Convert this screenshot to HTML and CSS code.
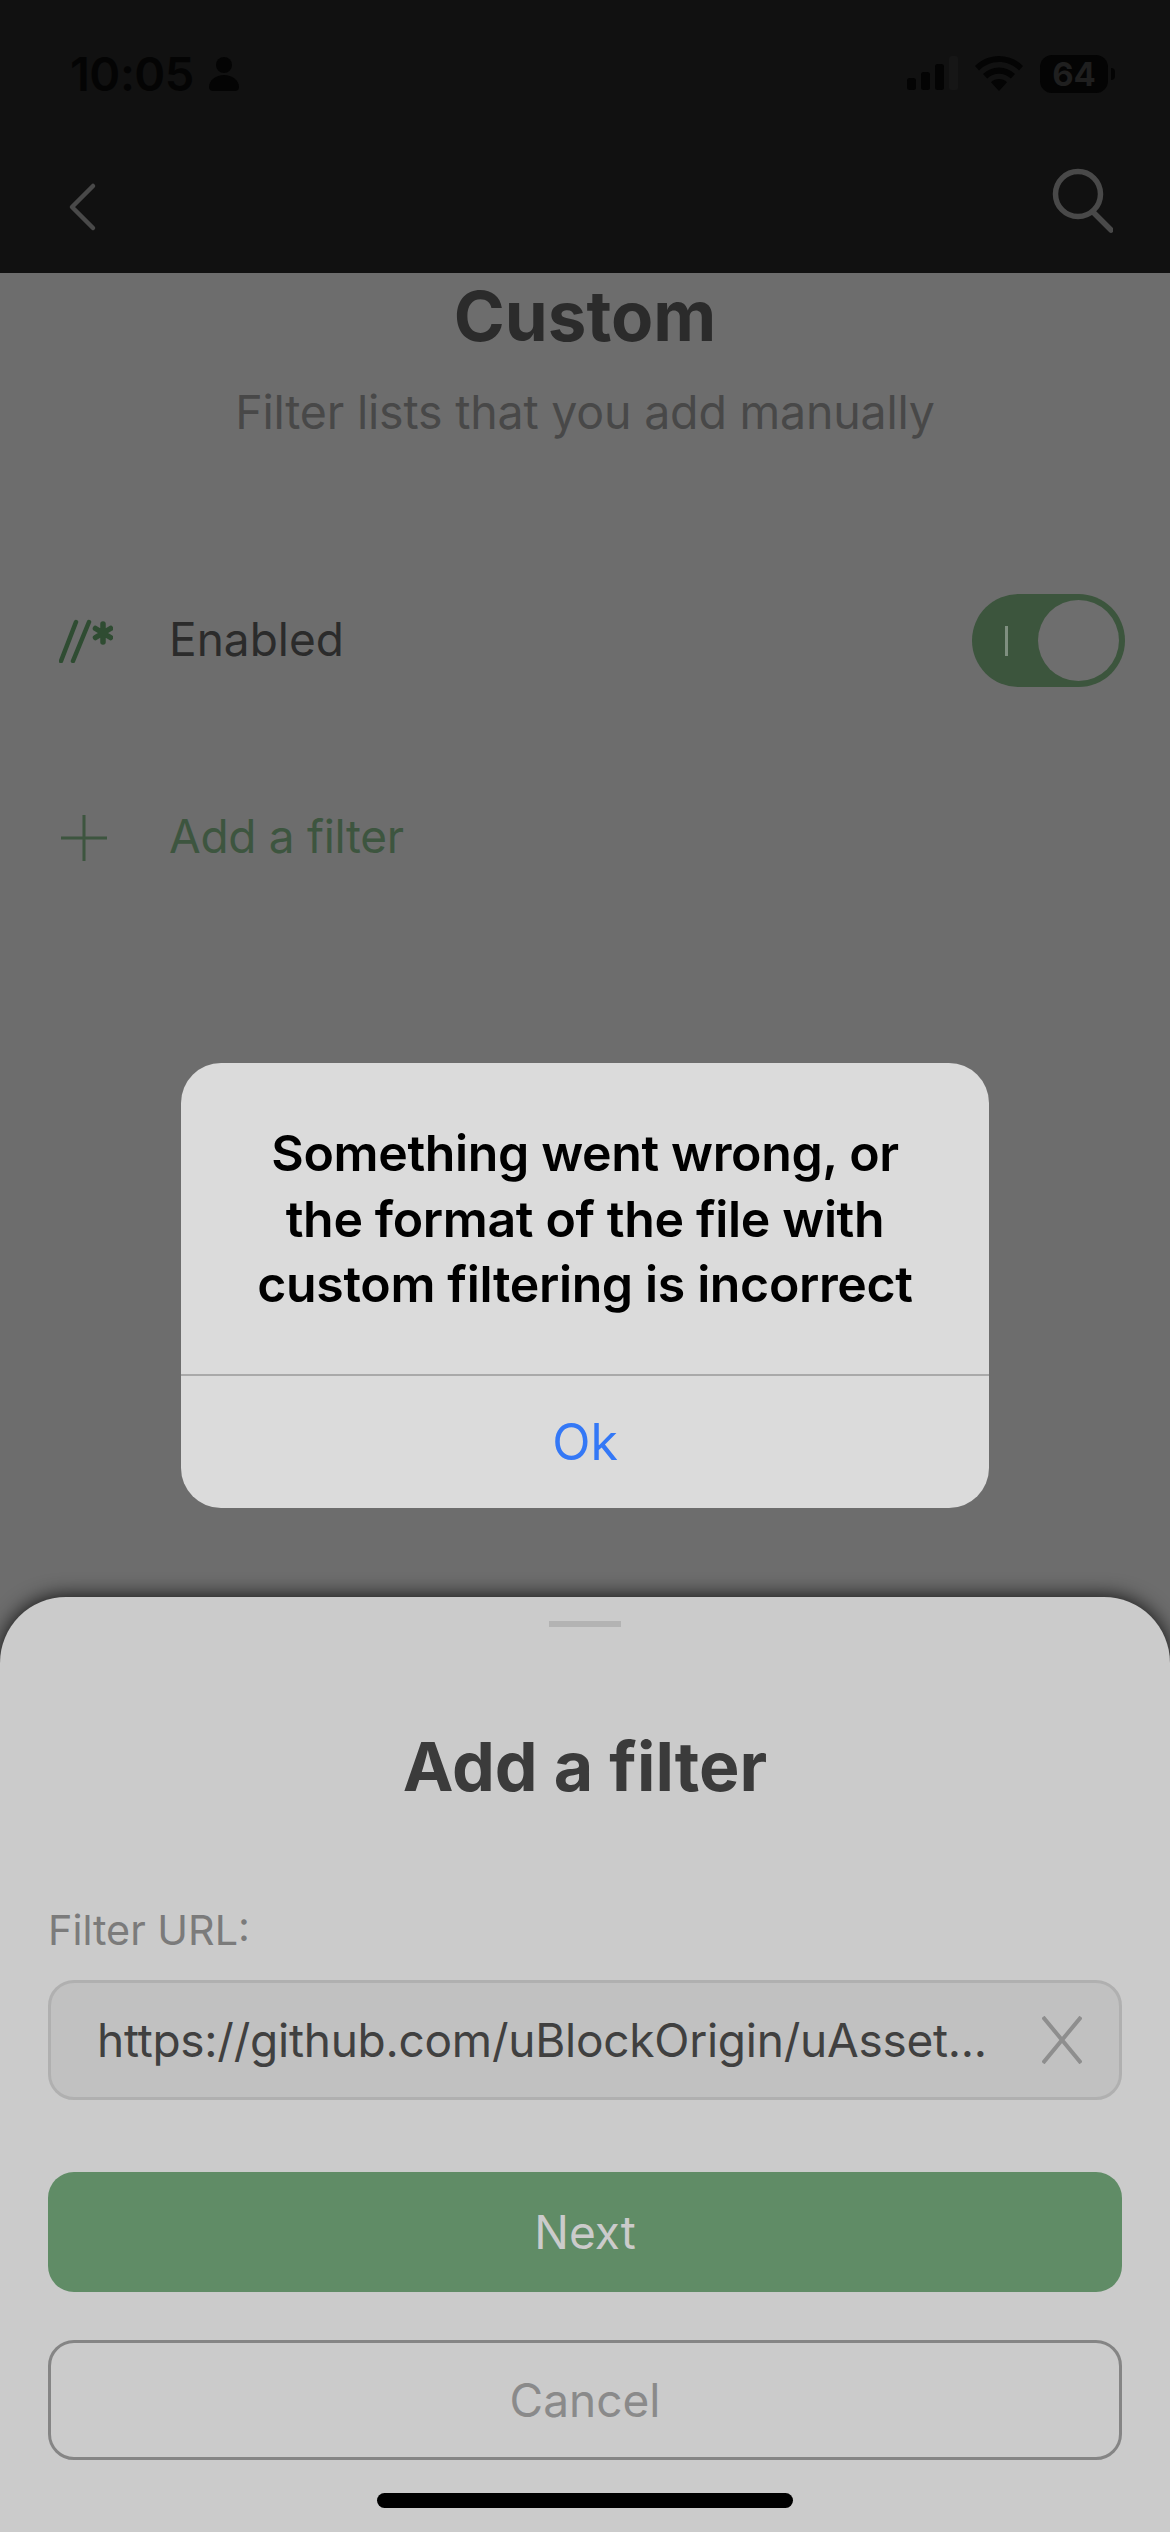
FILE: index.html
```html
<!DOCTYPE html>
<html lang="en">
<head>
<meta charset="utf-8">
<title>Custom</title>
<link rel="stylesheet" href="styles.css">
</head>
<body>
<div class="screen">
  <header class="top">
    <div class="status">
      <div class="status-left">
        <span class="time">10:05</span>
        <svg class="person" width="30" height="34" viewBox="0 0 30 34"><circle cx="15" cy="8" r="8"/><path d="M0 30c0-7 7-12 15-12s15 5 15 12c0 2.500-1.500 4-4 4H4c-2.500 0-4-1.500-4-4z"/></svg>
      </div>
      <div class="status-right">
        <svg class="signal" width="51" height="36" viewBox="0 0 51 36"><rect y="22" width="9" height="12" rx="2.500"/><rect x="14" y="16" width="9" height="18" rx="2.500"/><rect x="28" y="8" width="9" height="26" rx="2.500"/><rect class="signal-off" x="42" width="9" height="34" rx="2.500"/></svg>
        <svg class="wifi" width="48" height="36" viewBox="0 0 48 36"><path d="M24 0c9 0 17.500 3.500 24 10l-4 4.500C38.500 9 31.500 6 24 6S9.500 9 4 14.500L0 10C6.500 3.500 15 0 24 0z"/><path d="M24 11.500c6 0 11.500 2.300 16 6.500l-4.200 4.500c-3.200-3-7.400-4.800-11.800-4.800s-8.600 1.800-11.800 4.800L8 18c4.500-4.200 10-6.500 16-6.500z"/><path d="M24 23c3 0 5.800 1.100 8 3.200L24 35l-8-8.800c2.200-2.100 5-3.200 8-3.200z"/></svg>
        <div class="battery"><span class="battery-body">64</span><span class="battery-cap"></span></div>
      </div>
    </div>
    <nav class="nav">
      <svg class="back" width="30" height="50" viewBox="0 0 30 50"><path d="M26 4 5 25l21 21"/></svg>
      <svg class="search" width="62" height="66" viewBox="0 0 62 66"><circle cx="27" cy="27" r="22.500"/><path d="M42 45 60 63"/></svg>
    </nav>
  </header>

  <main class="content">
    <h1 class="title">Custom</h1>
    <p class="subtitle">Filter lists that you add manually</p>
    <div class="row row-enabled">
      <svg class="row-icon" width="54" height="44" viewBox="0 0 54 44"><path class="slashes" d="M2 42 17 3M14 42 30 3"/><path class="star" d="M44 5v18M36.500 9.500l15 9M51.500 9.500l-15 9"/></svg>
      <span class="row-label">Enabled</span>
      <div class="toggle"><span class="toggle-bar"></span><span class="toggle-knob"></span></div>
    </div>
    <div class="row row-add">
      <svg class="row-icon" width="54" height="48" viewBox="0 0 54 48"><path class="plus" d="M2 24h46M25 1v46"/></svg>
      <span class="row-label row-label-green">Add a filter</span>
    </div>
  </main>

  <section class="alert">
    <p class="alert-text">Something went wrong, or<br>the format of the file with<br>custom filtering is incorrect</p>
    <div class="alert-action">Ok</div>
  </section>

  <section class="sheet">
    <div class="handle"></div>
    <h2 class="sheet-title">Add a filter</h2>
    <label class="field-label">Filter URL:</label>
    <div class="field">
      <span class="field-value">https://github.com/uBlockOrigin/uAsset...</span>
      <svg class="clear" width="40" height="48" viewBox="0 0 40 48"><path d="M1 1l38 46M39 1 1 47"/></svg>
    </div>
    <div class="btn btn-primary">Next</div>
    <div class="btn btn-outline">Cancel</div>
    <div class="home-bar"></div>
  </section>
</div>
</body>
</html>
```
FILE: styles.css
```css
* { box-sizing: border-box; }
html, body { margin: 0; padding: 0; }
body { font-family: Inter, "Liberation Sans", sans-serif; background: #6d6d6d; }

.screen {
  position: relative;
  width: 1170px;
  height: 2532px;
  overflow: hidden;
  background: #6d6d6d;
}

/* header */
.top { height: 273px; background: #111; display: flex; flex-direction: column; }
.status { display: flex; justify-content: space-between; align-items: center; padding: 55px 55px 0 70px; height: 93px; }
.status-left { display: flex; align-items: center; gap: 15px; }
.time { font-size: 47px; line-height: 38px; font-weight: 600; color: #040404; letter-spacing: -.5px; }
.person { fill: #040404; }
.status-right { display: flex; align-items: center; }
.signal { fill: #040404; margin-right: 17px; }
.signal-off { fill: #161616; }
.wifi { fill: #040404; margin-right: 17px; }
.battery { display: flex; align-items: center; gap: 3px; }
.battery-body {
  width: 68px; height: 38px; border-radius: 12px; background: #040404;
  color: #1f1f1f; font-size: 33px; font-weight: 700; line-height: 38px; text-align: center;
}
.battery-cap { width: 4px; height: 12px; border-radius: 0 6px 6px 0; background: #040404; }

.nav { flex: 1; display: flex; justify-content: space-between; align-items: flex-start; padding: 80px 57px 0 67px; }
.back { fill: none; stroke: #494949; stroke-width: 4.500; stroke-linecap: round; stroke-linejoin: round; margin-top: 9px; }
.search { fill: none; stroke: #494949; stroke-width: 5.500; stroke-linecap: round; margin-top: -6px; }

/* page content */
.content { display: flex; flex-direction: column; }
.title { margin: 0; padding-top: 3px; text-align: center; font-size: 69px; line-height: 80px; font-weight: 700; color: #2b2b2b; }
.subtitle { margin: 0; padding-top: 27px; text-align: center; font-size: 46.500px; line-height: 58px; font-weight: 400; color: #484848; letter-spacing: -.2px; }
.row { display: flex; align-items: center; padding-left: 59px; }
.row-enabled { margin-top: 153px; height: 93px; padding-right: 45px; }
.row-add { margin-top: 104px; height: 93px; }
.row-icon { flex: none; fill: none; }
.row-label { margin-left: 56px; padding-bottom: 3px; font-size: 46px; line-height: 58px; color: #2b2b2b; }
.row-label-green { color: #3d553f; letter-spacing: -.3px; }
.slashes { stroke: #2f4c32; stroke-width: 4.500; stroke-linecap: round; }
.star { stroke: #2f4c32; stroke-width: 5.500; stroke-linecap: round; }
.plus { stroke: #3d553f; stroke-width: 3; }
.toggle {
  margin-left: auto; width: 153px; height: 93px; border-radius: 47px; background: #3c553d;
  display: flex; align-items: center; justify-content: space-between; padding: 0 6px 0 33px;
}
.toggle-bar { width: 3px; height: 30px; background: #7f8f80; }
.toggle-knob { width: 81px; height: 81px; border-radius: 50%; background: #6e6e6e; }

/* alert */
.alert {
  position: absolute; left: 181px; top: 1063px; width: 808px; height: 445px;
  border-radius: 40px; background: #dbdbdb; display: flex; flex-direction: column;
}
.alert-text {
  margin: 0; height: 313px; padding-top: 58px; text-align: center;
  font-size: 50px; line-height: 65.500px; font-weight: 600; color: #000; letter-spacing: -.35px;
  border-bottom: 2px solid #a9a9a9;
}
.alert-action { flex: 1; display: flex; align-items: center; justify-content: center; font-size: 50px; color: #3478f6; }

/* bottom sheet */
.sheet {
  position: absolute; left: 0; right: 0; bottom: 0; height: 935px;
  border-radius: 66px 66px 0 0; background: #cbcbcb;
  box-shadow: 0 -1px 20px rgba(0, 0, 0, .85);
  display: flex; flex-direction: column; padding: 24px 48px 0;
}
.handle { flex: none; align-self: center; width: 72px; height: 6px; background: #b3b3b3; }
.sheet-title { margin: 0; padding-top: 99px; text-align: center; font-size: 68px; line-height: 80px; font-weight: 700; color: #3b3b3b; }
.field-label { margin-top: 99px; font-size: 41.300px; line-height: 50px; color: #7b7b7b; }
.field {
  margin-top: 25px; height: 120px; border: 3px solid #b0b0b0; border-radius: 26px; background: #c1c1c1;
  display: flex; align-items: center; justify-content: space-between; padding: 0 37px 0 46px;
}
.field-value { font-size: 46px; line-height: 58px; color: #404040; white-space: nowrap; letter-spacing: -.25px; }
.clear { fill: none; stroke: #8e8e8e; stroke-width: 4; }
.btn { flex: none; height: 120px; border-radius: 26px; display: flex; align-items: center; justify-content: center; font-size: 46px; }
.btn-primary { margin-top: 72px; background: #608c66; color: #cbcbcb; }
.btn-outline { margin-top: 48px; border: 3px solid #858585; color: #8a8a8a; }
.home-bar { position: absolute; left: 377px; bottom: 24px; width: 416px; height: 15px; border-radius: 8px; background: #000; }
```
